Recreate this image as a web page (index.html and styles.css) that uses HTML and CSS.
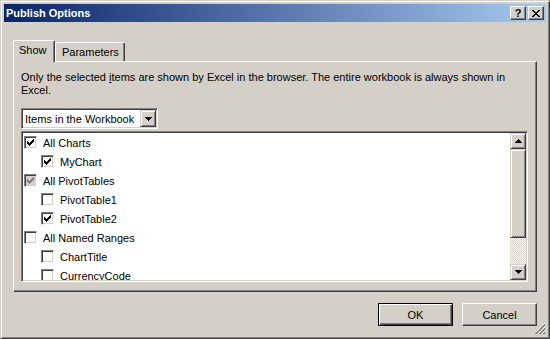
FILE: index.html
```html
<!DOCTYPE html>
<html>
<head>
<meta charset="utf-8">
<link rel="stylesheet" href="styles.css">
</head>
<body>
<div class="window">
  <div class="titlebar">
    <span class="title">Publish Options</span>
    <div class="tbtns">
      <div class="tbtn help">?</div>
      <div class="tbtn close">
        <svg width="8" height="7" viewBox="0 0 8 7" shape-rendering="crispEdges"><path fill="#000" d="M0 0h2v1h-2z M6 0h2v1h-2z M1 1h2v1h-2z M5 1h2v1h-2z M2 2h4v1h-4z M3 3h2v1h-2z M2 4h4v1h-4z M1 5h2v1h-2z M5 5h2v1h-2z M0 6h2v1h-2z M6 6h2v1h-2z"/></svg>
      </div>
    </div>
  </div>
  <div class="body">
    <div class="tabs">
      <div class="tab active">Show</div>
      <div class="tab">Parameters</div>
    </div>
    <div class="panel">
      <p class="desc">Only the selected <u>i</u>tems are shown by Excel in the browser. The entire workbook is always shown in<br>Excel.</p>
      <div class="combo">
        <span class="combo-text">Items in the Workbook</span>
        <span class="drop">
          <svg width="7" height="4" viewBox="0 0 7 4" shape-rendering="crispEdges"><path fill="#000" d="M0 0h7v1h-7z M1 1h5v1h-5z M2 2h3v1h-3z M3 3h1v1h-1z"/></svg>
        </span>
      </div>
      <div class="list">
        <div class="rows">
          <div class="row"><span class="cb checked"><svg width="7" height="7" viewBox="0 0 7 7" shape-rendering="crispEdges"><path d="M0 2h1v3h-1z M1 3h1v3h-1z M2 4h1v3h-1z M3 3h1v3h-1z M4 2h1v3h-1z M5 1h1v3h-1z M6 0h1v3h-1z"/></svg></span><span class="label">All Charts</span></div>
          <div class="row child"><span class="cb checked"><svg width="7" height="7" viewBox="0 0 7 7" shape-rendering="crispEdges"><path d="M0 2h1v3h-1z M1 3h1v3h-1z M2 4h1v3h-1z M3 3h1v3h-1z M4 2h1v3h-1z M5 1h1v3h-1z M6 0h1v3h-1z"/></svg></span><span class="label">MyChart</span></div>
          <div class="row"><span class="cb checked disabled"><svg width="7" height="7" viewBox="0 0 7 7" shape-rendering="crispEdges"><path d="M0 2h1v3h-1z M1 3h1v3h-1z M2 4h1v3h-1z M3 3h1v3h-1z M4 2h1v3h-1z M5 1h1v3h-1z M6 0h1v3h-1z"/></svg></span><span class="label">All PivotTables</span></div>
          <div class="row child"><span class="cb"></span><span class="label">PivotTable1</span></div>
          <div class="row child"><span class="cb checked"><svg width="7" height="7" viewBox="0 0 7 7" shape-rendering="crispEdges"><path d="M0 2h1v3h-1z M1 3h1v3h-1z M2 4h1v3h-1z M3 3h1v3h-1z M4 2h1v3h-1z M5 1h1v3h-1z M6 0h1v3h-1z"/></svg></span><span class="label">PivotTable2</span></div>
          <div class="row"><span class="cb"></span><span class="label">All Named Ranges</span></div>
          <div class="row child"><span class="cb"></span><span class="label">ChartTitle</span></div>
          <div class="row child"><span class="cb"></span><span class="label">CurrencyCode</span></div>
        </div>
        <div class="scrollbar">
          <div class="sbtn">
            <svg width="7" height="4" viewBox="0 0 7 4" shape-rendering="crispEdges"><path fill="#000" d="M3 0h1v1h-1z M2 1h3v1h-3z M1 2h5v1h-5z M0 3h7v1h-7z"/></svg>
          </div>
          <div class="thumb"></div>
          <div class="track"></div>
          <div class="sbtn">
            <svg width="7" height="4" viewBox="0 0 7 4" shape-rendering="crispEdges"><path fill="#000" d="M0 0h7v1h-7z M1 1h5v1h-5z M2 2h3v1h-3z M3 3h1v1h-1z"/></svg>
          </div>
        </div>
      </div>
    </div>
    <div class="actions">
      <div class="btn default">OK</div>
      <div class="btn">Cancel</div>
    </div>
  </div>
  <svg class="grip" width="12" height="12" viewBox="0 0 12 12" shape-rendering="crispEdges">
    <path stroke="#fff" d="M11 0L0 11 M11 4L4 11 M11 8L8 11"/>
    <path stroke="#808080" d="M11 1L1 11 M11 2L2 11 M11 5L5 11 M11 6L6 11 M11 9L9 11 M11 10L10 11"/>
  </svg>
</div>
</body>
</html>
```
FILE: styles.css
```css
* { box-sizing: border-box; }
html, body { margin: 0; padding: 0; }
body {
  width: 550px;
  height: 339px;
  overflow: hidden;
  background: #d4d0c8;
  font-family: "Liberation Sans", Arial, sans-serif;
  font-size: 11px;
  color: #000;
}
.window {
  position: relative;
  width: 550px;
  height: 339px;
  background: #d4d0c8;
  border: 1px solid;
  border-color: #d4d0c8 #404040 #404040 #d4d0c8;
  box-shadow: inset 1px 1px #fff, inset -1px -1px #808080;
  padding: 3px;
}
.titlebar {
  height: 18px;
  display: flex;
  align-items: center;
  justify-content: space-between;
  background: linear-gradient(to right, #0a246a, #a6caf0);
}
.title {
  color: #fff;
  font-weight: bold;
  padding-left: 2px;
  line-height: 18px;
}
.tbtns {
  display: flex;
  gap: 2px;
  margin-right: 2px;
}
.tbtn {
  width: 16px;
  height: 14px;
  background: #d4d0c8;
  border: 1px solid;
  border-color: #fff #404040 #404040 #fff;
  box-shadow: inset -1px -1px #808080;
  display: flex;
  align-items: center;
  justify-content: center;
}
.tbtn.help {
  font-weight: bold;
  font-size: 11px;
  line-height: 12px;
  padding-top: 0;
}
.tbtn.close svg { margin-top: 0; }
.body {
  padding: 18px 9px 0 9px;
}
.tabs {
  display: flex;
  align-items: flex-end;
  height: 21px;
}
.tab {
  position: relative;
  height: 19px;
  background: #d4d0c8;
  border-top: 1px solid #fff;
  border-left: 1px solid #fff;
  border-right: 1px solid #404040;
  box-shadow: inset -1px 0 #808080;
  border-radius: 2px 2px 0 0;
  line-height: 17px;
  white-space: nowrap;
}
.tab.active {
  width: 42px;
  height: 22px;
  margin-bottom: -1px;
  padding-left: 5px;
  line-height: 19px;
  z-index: 1;
}
.tab:not(.active) {
  width: 70px;
  padding-left: 6px;
  padding-top: 1px;
}
.panel {
  height: 231px;
  border: 1px solid;
  border-color: #fff #404040 #404040 #fff;
  box-shadow: inset -1px -1px #808080;
  padding: 9px 8px 0 7px;
}
.desc {
  margin: 0;
  line-height: 13px;
}
.combo {
  margin-top: 11px;
  width: 137px;
  height: 21px;
  background: #fff;
  border: 1px solid;
  border-color: #808080 #fff #fff #808080;
  box-shadow: inset 1px 1px #404040, inset -1px -1px #d4d0c8;
  padding: 1px;
  display: flex;
  align-items: center;
  justify-content: space-between;
}
.combo-text {
  padding-left: 2px;
}
.drop {
  width: 16px;
  height: 17px;
  background: #d4d0c8;
  border: 1px solid;
  border-color: #d4d0c8 #404040 #404040 #d4d0c8;
  box-shadow: inset 1px 1px #fff, inset -1px -1px #808080;
  display: flex;
  align-items: center;
  justify-content: center;
}
.list {
  margin-top: 2px;
  height: 151px;
  background: #fff;
  border: 1px solid;
  border-color: #808080 #fff #fff #808080;
  box-shadow: inset 1px 1px #404040, inset -1px -1px #d4d0c8;
  padding: 1px;
  display: flex;
}
.rows {
  flex: 1;
  overflow: hidden;
  padding-left: 1px;
}
.row {
  height: 19px;
  display: flex;
  align-items: center;
  white-space: nowrap;
}
.row.child { padding-left: 17px; }
.cb {
  width: 13px;
  height: 13px;
  flex: none;
  background: #fff;
  border: 1px solid;
  border-color: #808080 #fff #fff #808080;
  box-shadow: inset 1px 1px #404040, inset -1px -1px #d4d0c8;
  display: flex;
  align-items: center;
  justify-content: center;
  margin-right: 6px;
}
.cb svg { fill: #000; }
.cb.disabled { background: #d4d0c8; }
.cb.disabled svg { fill: #808080; }
.scrollbar {
  width: 16px;
  display: flex;
  flex-direction: column;
}
.sbtn, .thumb {
  background: #d4d0c8;
  border: 1px solid;
  border-color: #d4d0c8 #404040 #404040 #d4d0c8;
  box-shadow: inset 1px 1px #fff, inset -1px -1px #808080;
}
.sbtn {
  height: 16px;
  flex: none;
  display: flex;
  align-items: center;
  justify-content: center;
}
.thumb {
  height: 89px;
  flex: none;
}
.track {
  flex: 1;
  background: conic-gradient(#fff 25%, #d4d0c8 0 50%, #fff 0 75%, #d4d0c8 0) 0 0 / 2px 2px;
}
.actions {
  display: flex;
  justify-content: flex-end;
  gap: 9px;
  margin-top: 11px;
}
.btn {
  width: 75px;
  height: 23px;
  background: #d4d0c8;
  border: 1px solid;
  border-color: #fff #404040 #404040 #fff;
  box-shadow: inset -1px -1px #808080;
  display: flex;
  align-items: center;
  justify-content: center;
}
.btn.default {
  border-color: #000;
  box-shadow: inset 1px 1px #fff, inset -1px -1px #404040, inset -2px -2px #808080;
}
.grip {
  position: absolute;
  right: 3px;
  bottom: 3px;
}
```
